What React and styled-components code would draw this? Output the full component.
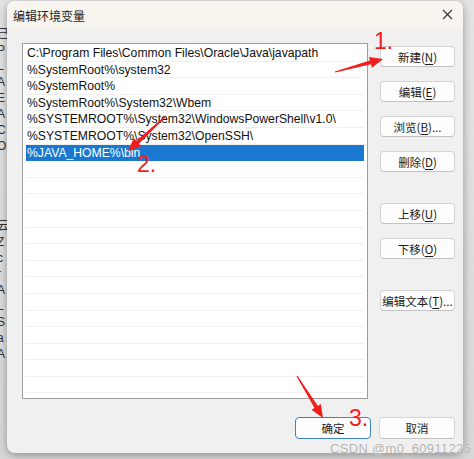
import React from 'react'
import styled, { createGlobalStyle } from 'styled-components'

const paths = [
  'C:\\Program Files\\Common Files\\Oracle\\Java\\javapath',
  '%SystemRoot%\\system32',
  '%SystemRoot%',
  '%SystemRoot%\\System32\\Wbem',
  '%SYSTEMROOT%\\System32\\WindowsPowerShell\\v1.0\\',
  '%SYSTEMROOT%\\System32\\OpenSSH\\',
  '%JAVA_HOME%\\bin',
]

const sideButtons = [
  { label: '新建', key: 'N', gap: 0 },
  { label: '编辑', key: 'E', gap: 14 },
  { label: '浏览', key: 'B', tail: '...', gap: 14 },
  { label: '删除', key: 'D', gap: 14 },
  { label: '上移', key: 'U', gap: 31 },
  { label: '下移', key: 'O', gap: 14 },
  { label: '编辑文本', key: 'T', tail: '...', gap: 31 },
]

const behind = ['己', 'P', 'L', 'A', 'E', 'A', 'C', 'O', '', '', '', '', '云', 'Z', 'c', 'r', 'A', 'L', 'S', 'a', 'A']

// red annotation arrows: tail -> tip
const arrows = [
  [335, 72, 383, 59],
  [166, 116, 128, 151],
  [297, 376, 323, 418],
]

function arrowPoints([x1, y1, x2, y2]) {
  const dx = x2 - x1
  const dy = y2 - y1
  const len = Math.hypot(dx, dy)
  const ux = dx / len
  const uy = dy / len
  const nx = -uy
  const ny = ux
  const head = 13
  const bx = x2 - ux * head
  const by = y2 - uy * head
  const pt = (x, y, w) => [x + nx * w, y + ny * w]
  const pts = [
    pt(x1, y1, 0.6),
    pt(bx, by, 2),
    pt(bx, by, 5.5),
    [x2, y2],
    pt(bx, by, -5.5),
    pt(bx, by, -2),
    pt(x1, y1, -0.6),
  ]
  return pts.map(p => p.map(v => v.toFixed(1)).join(',')).join(' ')
}

export default function App() {
  const empty = Array.from({ length: 15 })
  return (
    <>
      <Global />
      <Desktop>
        <BackStrip>
          {behind.map((c, i) => (
            <BackLine key={i}>{c}</BackLine>
          ))}
        </BackStrip>
        <Dialog>
          <TitleBar>
            <Title>编辑环境变量</Title>
            <Close>
              <svg width="11" height="11" viewBox="0 0 11 11">
                <path d="M1 1 L10 10 M10 1 L1 10" stroke="#333" strokeWidth="1.1" />
              </svg>
            </Close>
          </TitleBar>
          <Body>
            <List>
              {paths.map((p, i) => (
                <Row key={p} selected={i === paths.length - 1}>{p}</Row>
              ))}
              {empty.map((_, i) => (
                <Row key={'e' + i} />
              ))}
            </List>
            <SideCol>
              {sideButtons.map(b => (
                <Button key={b.key} gap={b.gap}>
                  {b.label}(<u>{b.key}</u>){b.tail}
                </Button>
              ))}
            </SideCol>
          </Body>
          <Footer>
            <Button primary>确定</Button>
            <Button>取消</Button>
          </Footer>
        </Dialog>

        <Marks width="474" height="459" viewBox="0 0 474 459">
          <g fill="#f21d1d" stroke="none">
            {arrows.map((a, i) => (
              <polygon key={i} points={arrowPoints(a)} />
            ))}
          </g>
          <g fill="#f21d1d" fontFamily="'Liberation Sans', Arial, sans-serif" fontSize="23">
            <text x="374" y="49">1.</text>
            <text x="137" y="172">2.</text>
            <text x="349" y="426">3.</text>
          </g>
        </Marks>
        <Watermark>CSDN @m0_60911225</Watermark>
      </Desktop>
    </>
  )
}

const Global = createGlobalStyle`
  html, body {
    margin: 0;
    padding: 0;
    background: #dcdcdc;
    overflow: hidden;
  }
`

const Desktop = styled.div`
  position: relative;
  width: 474px;
  height: 459px;
  overflow: hidden;
  background: linear-gradient(#e4e4e4, #d8d8d8);
  padding: 1px 0 0 7px;
  box-sizing: border-box;
  font-family: 'Noto Sans', 'Noto Sans CJK SC', sans-serif;
`

const BackStrip = styled.div`
  position: absolute;
  left: -3px;
  top: 26px;
  width: 10px;
  display: flex;
  flex-direction: column;
  font-family: 'Liberation Sans', 'Noto Sans CJK SC', sans-serif;
  font-size: 12px;
  color: #333;
`

const BackLine = styled.div`
  height: 16px;
  line-height: 16px;
`

const Dialog = styled.div`
  position: relative;
  width: 456px;
  height: 452px;
  background: #f0f0f0;
  border-radius: 8px;
  box-shadow: 0 2px 8px rgba(0, 0, 0, 0.35);
  display: flex;
  flex-direction: column;
  overflow: hidden;
`

const TitleBar = styled.div`
  height: 28px;
  background: #f8f5f0;
  display: flex;
  align-items: center;
  justify-content: space-between;
  padding: 0 10px 0 6px;
  flex-shrink: 0;
`

const Title = styled.span`
  font-family: 'Noto Sans CJK SC', sans-serif;
  font-size: 12px;
  color: #222;
`

const Close = styled.span`
  display: flex;
  margin-top: -1px;
`

const Body = styled.div`
  display: flex;
  gap: 12px;
  padding: 14px 8px 0 15px;
`

const List = styled.div`
  width: 346px;
  height: 356px;
  box-sizing: border-box;
  border: 1px solid #9e9e9e;
  background: #fff;
  padding: 1px 3px 0 3px;
  overflow: hidden;
  flex-shrink: 0;
`

const Row = styled.div`
  height: 16.6px;
  line-height: 16px;
  box-sizing: border-box;
  padding-left: 1px;
  font-family: 'Liberation Sans', Arial, sans-serif;
  font-size: 12.2px;
  white-space: nowrap;
  color: ${p => (p.selected ? '#fff' : '#111')};
  background: ${p => (p.selected ? '#1a78d0' : 'transparent')};
  border-bottom: 1px solid ${p => (p.selected ? '#1a78d0' : '#f0f0f0')};
`

const SideCol = styled.div`
  display: flex;
  flex-direction: column;
  padding-top: 3px;
`

const Button = styled.div`
  width: 75px;
  height: 21px;
  box-sizing: border-box;
  margin-top: ${p => (p.gap || 0)}px;
  border: 1px solid ${p => (p.primary ? '#3b82c8' : '#d4d4d4')};
  border-bottom-color: ${p => (p.primary ? '#3b82c8' : '#c2c2c2')};
  border-radius: 4px;
  background: #fdfdfd;
  display: flex;
  align-items: center;
  justify-content: center;
  font-family: 'Noto Sans CJK SC', sans-serif;
  font-size: 11.5px;
  color: #1a1a1a;
  white-space: nowrap;

  u {
    text-underline-offset: 2px;
  }
`

const Footer = styled.div`
  display: flex;
  justify-content: flex-end;
  gap: 8px;
  padding: 0 8px 0 0;
  margin-top: 18px;

  ${Button} {
    width: 76px;
    height: 22px;
  }
`

const Marks = styled.svg`
  position: absolute;
  left: 0;
  top: 0;
  pointer-events: none;
`

const Watermark = styled.div`
  position: absolute;
  right: 3px;
  bottom: 3px;
  font-family: 'Liberation Sans', Arial, sans-serif;
  font-size: 13px;
  color: #b2b2b2;
  text-shadow: 0 0 1px #ffffff;
  letter-spacing: 0.3px;
`
